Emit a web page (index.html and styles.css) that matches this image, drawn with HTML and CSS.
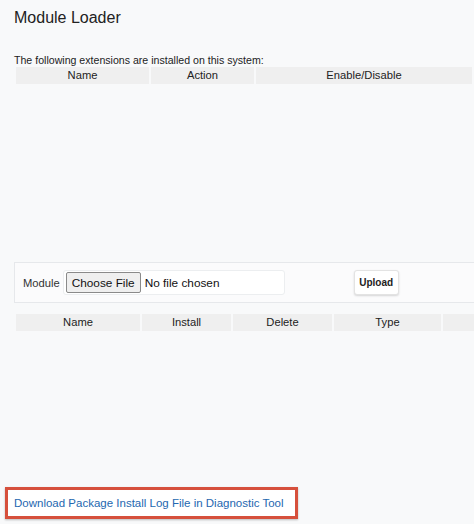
FILE: index.html
```html
<!DOCTYPE html>
<html lang="en">
<head>
<meta charset="utf-8">
<title>Module Loader</title>
<link rel="stylesheet" href="styles.css">
</head>
<body>
<div class="page">
  <h1 class="title">Module Loader</h1>
  <p class="intro">The following extensions are installed on this system:</p>
  <div class="grid-head grid-ext">
    <div class="th">Name</div>
    <div class="th">Action</div>
    <div class="th">Enable/Disable</div>
  </div>
  <div class="ext-body"></div>

  <form class="upload-box">
    <label class="upload-label">Module</label>
    <div class="file-field">
      <span class="file-btn">Choose File</span>
      <span class="file-name">No file chosen</span>
    </div>
    <button type="button" class="upload-btn">Upload</button>
  </form>

  <div class="grid-head grid-pkg">
    <div class="th">Name</div>
    <div class="th">Install</div>
    <div class="th">Delete</div>
    <div class="th">Type</div>
    <div class="th"></div>
  </div>
  <div class="pkg-body"></div>

  <div class="log-box">
    <a class="log-link" href="#">Download Package Install Log File in Diagnostic Tool</a>
  </div>
</div>
</body>
</html>
```

FILE: styles.css
```css
html, body {
  margin: 0;
  padding: 0;
  overflow: hidden;
  background: #f8f9fa;
}
body {
  font-family: "Liberation Sans", Arial, Helvetica, sans-serif;
  color: #222;
  width: 474px;
  height: 524px;
}
.page {
  display: flex;
  flex-direction: column;
  align-items: flex-start;
}
.title {
  margin: 8px 0 0 14px;
  font-size: 16px;
  line-height: 19px;
  font-weight: normal;
  color: #222;
}
.intro {
  margin: 27px 0 0 14px;
  font-size: 10.6px;
  line-height: 13px;
  color: #222;
  white-space: nowrap;
}
.grid-head {
  display: grid;
  column-gap: 2px;
  margin-left: 16px;
}
.th {
  background: #efefef;
  height: 17px;
  line-height: 17px;
  font-size: 11.2px;
  color: #222;
  text-align: center;
  white-space: nowrap;
}
.grid-ext { grid-template-columns: 133px 103px 216px; }
.ext-body { height: 178px; }

.upload-box {
  box-sizing: border-box;
  margin: 0 0 0 14px;
  width: 460px;
  height: 41px;
  border: 1px solid #e6e8eb;
  border-right: none;
  background: #fbfbfc;
  display: flex;
  align-items: center;
  padding-left: 8px;
}
.upload-label {
  font-size: 11.2px;
  color: #333;
  margin-right: 3px;
}
.file-field {
  box-sizing: border-box;
  width: 222px;
  height: 25px;
  background: #fff;
  border: 1px solid #eceef0;
  border-radius: 3px;
  display: flex;
  align-items: center;
  padding-left: 2px;
}
.file-btn {
  box-sizing: border-box;
  height: 21px;
  width: 75px;
  display: flex;
  align-items: center;
  justify-content: center;
  background: #efefef;
  border: 1px solid #8a8a8a;
  border-radius: 2px;
  font-size: 11.8px;
  color: #111;
}
.file-name {
  margin-left: 4px;
  font-size: 11.8px;
  color: #111;
}
.upload-btn {
  box-sizing: border-box;
  margin-left: 69px;
  width: 45px;
  height: 25px;
  background: #fff;
  border: 1px solid #e3e3e3;
  border-radius: 3px;
  box-shadow: 0 1px 2px rgba(0,0,0,0.15);
  font-family: "Liberation Sans", Arial, sans-serif;
  font-size: 10px;
  font-weight: bold;
  color: #222;
  padding: 0;
}

.grid-pkg {
  margin-top: 11px;
  grid-template-columns: 124px 89px 99px 107px 31px;
}
.pkg-body { height: 156px; }

.log-box {
  box-sizing: border-box;
  margin-left: 5px;
  width: 293px;
  height: 32px;
  border: 3px solid #d6503c;
  background: #fff;
  box-shadow: 0 1px 2px rgba(0,0,0,0.25);
  display: flex;
  align-items: center;
  padding-left: 6px;
}
.log-link {
  font-size: 11.5px;
  color: #2467b0;
  text-decoration: none;
  white-space: nowrap;
}
```
